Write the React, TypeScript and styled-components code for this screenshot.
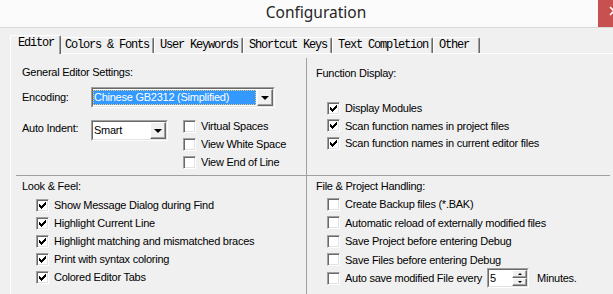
import React from 'react';
import styled, { createGlobalStyle } from 'styled-components';

const Global = createGlobalStyle`
  html, body { margin: 0; padding: 0; background: #f0f0f0; overflow: hidden; }
  body { font-family: "Liberation Sans", Arial, sans-serif; }
`;

const Window = styled.div`
  width: 613px;
  height: 294px;
  overflow: hidden;
  background: #f0f0f0;
  display: flex;
  flex-direction: column;
  font-family: "Liberation Sans", Arial, sans-serif;
  font-size: 11px;
  letter-spacing: -0.25px;
  color: #000;
`;

const TitleBar = styled.div`
  height: 27px;
  flex: none;
  background: #fbfbfb;
  border-bottom: 1px solid #d9d9d9;
  display: flex;
  align-items: flex-start;
`;

const Title = styled.div`
  flex: 1;
  text-align: center;
  padding-left: 34px;
  line-height: 25px;
  font-family: "Noto Sans", "Open Sans", sans-serif;
  font-size: 15.5px;
  letter-spacing: 0;
  color: #262626;
`;

const CloseButton = styled.div`
  width: 15px;
  height: 27px;
  box-sizing: border-box;
  background: #c75050;
  overflow: hidden;
  padding: 6px 0 0 11px;
`;

const Body = styled.div`
  flex: 1;
  min-height: 0;
  padding-top: 7px;
  display: flex;
  flex-direction: column;
`;

const TabStrip = styled.div`
  display: flex;
  align-items: flex-end;
  height: 18px;
  flex: none;
  padding-left: 12px;
  position: relative;
  z-index: 1;
`;

const Tab = styled.div<{ $active?: boolean; $min?: number }>`
  box-sizing: border-box;
  height: ${(p) => (p.$active ? 19 : 16)}px;
  margin: ${(p) => (p.$active ? '0 -2px -1px' : '0')};
  min-width: ${(p) => p.$min ?? 0}px;
  padding: ${(p) => (p.$active ? '0 6px 0 7px' : '0 4px 0 5px')};
  border: 1px solid #fff;
  border-right-color: #696969;
  border-bottom: none;
  border-radius: 2px 2px 0 0;
  box-shadow: inset -1px 0 #a0a0a0;
  background: #f0f0f0;
  font-family: "Liberation Mono", "Courier New", monospace;
  font-size: 12px;
  letter-spacing: -1.2px;
  line-height: 14px;
  white-space: nowrap;
  color: #000;
  position: relative;
  z-index: ${(p) => (p.$active ? 1 : 0)};
`;

const Panel = styled.div`
  flex: 1;
  min-height: 0;
  margin-left: 10px;
  border-top: 1px solid #fff;
  border-left: 1px solid #fff;
  padding: 4px 3px 0 5px;
  display: grid;
  grid-template-columns: 291px 1fr;
  grid-template-rows: 118px 1fr;
`;

const Group = styled.div<{ $divRight?: boolean; $divBottom?: boolean; $pt: number; $pl: number }>`
  box-sizing: border-box;
  border-right: ${(p) => (p.$divRight ? '1px solid #a0a0a0' : 'none')};
  border-bottom: ${(p) => (p.$divBottom ? '1px solid #a0a0a0' : 'none')};
  padding-top: ${(p) => p.$pt}px;
  padding-left: ${(p) => p.$pl}px;
  display: flex;
  flex-direction: column;
  min-width: 0;
`;

const Heading = styled.div`
  line-height: 13px;
  white-space: nowrap;
`;

const FieldRow = styled.div<{ $mt: number }>`
  display: flex;
  align-items: center;
  margin-top: ${(p) => p.$mt}px;
`;

const IndentRow = styled.div`
  display: flex;
  align-items: flex-start;
  margin-top: 9px;
`;

const Label = styled.div<{ $mt?: number }>`
  width: 69px;
  flex: none;
  line-height: 21px;
  margin-top: ${(p) => p.$mt ?? 0}px;
  white-space: nowrap;
`;

const Combo = styled.div<{ $w: number; $mt?: number }>`
  width: ${(p) => p.$w}px;
  height: 21px;
  flex: none;
  box-sizing: border-box;
  margin-top: ${(p) => p.$mt ?? 0}px;
  border: 1px solid;
  border-color: #a0a0a0 #fff #fff #a0a0a0;
  display: flex;
`;

const ComboInner = styled.div`
  flex: 1;
  display: flex;
  border: 1px solid;
  border-color: #696969 #e3e3e3 #e3e3e3 #696969;
  background: #fff;
  min-width: 0;
`;

const ComboText = styled.div<{ $selected?: boolean }>`
  flex: 1;
  min-width: 0;
  margin: ${(p) => (p.$selected ? '1px 1px 1px 0' : '0')};
  padding-left: 1px;
  background: ${(p) => (p.$selected ? '#3399ff' : 'transparent')};
  color: ${(p) => (p.$selected ? '#fff' : '#000')};
  outline: ${(p) => (p.$selected ? '1px dotted #e8c878' : 'none')};
  outline-offset: -1px;
  line-height: ${(p) => (p.$selected ? 15 : 17)}px;
  white-space: nowrap;
  overflow: hidden;
`;

const ArrowButton = styled.div<{ $w: number }>`
  width: ${(p) => p.$w}px;
  flex: none;
  box-sizing: border-box;
  border: 1px solid;
  border-color: #fff #696969 #696969 #fff;
  box-shadow: inset -1px -1px #a0a0a0;
  background: #f0f0f0;
  display: flex;
  align-items: center;
  justify-content: center;
`;

const DownArrow = styled.span<{ $size: number }>`
  width: 0;
  height: 0;
  border-left: ${(p) => p.$size}px solid transparent;
  border-right: ${(p) => p.$size}px solid transparent;
  border-top: ${(p) => p.$size}px solid #000;
`;

const UpArrow = styled.span<{ $size: number }>`
  width: 0;
  height: 0;
  border-left: ${(p) => p.$size}px solid transparent;
  border-right: ${(p) => p.$size}px solid transparent;
  border-bottom: ${(p) => p.$size}px solid #000;
`;

const CheckList = styled.div<{ $mt: number; $pl: number; $row: number }>`
  display: flex;
  flex-direction: column;
  margin-top: ${(p) => p.$mt}px;
  padding-left: ${(p) => p.$pl}px;
  & > * { height: ${(p) => p.$row}px; }
`;

const CheckRow = styled.div`
  display: flex;
  align-items: center;
  gap: 5px;
  white-space: nowrap;
`;

const Box = styled.span`
  width: 13px;
  height: 13px;
  box-sizing: border-box;
  flex: none;
  border: 1px solid;
  border-color: #a0a0a0 #fff #fff #a0a0a0;
  background: #fff;
  box-shadow: inset 1px 1px #696969, inset -1px -1px #e3e3e3;
  display: flex;
  align-items: center;
  justify-content: center;
`;

const Spinner = styled.div`
  width: 42px;
  height: 20px;
  box-sizing: border-box;
  margin-left: 0px;
  border: 1px solid;
  border-color: #a0a0a0 #fff #fff #a0a0a0;
  display: flex;
`;

const SpinInner = styled.div`
  flex: 1;
  display: flex;
  border: 1px solid;
  border-color: #696969 #e3e3e3 #e3e3e3 #696969;
  background: #fff;
`;

const SpinValue = styled.div`
  flex: 1;
  padding-left: 1px;
  line-height: 16px;
`;

const SpinButtons = styled.div`
  width: 15px;
  display: flex;
  flex-direction: column;
`;

const SpinHalf = styled(ArrowButton)`
  flex: 1;
  width: 15px;
`;

const After = styled.span`
  margin-left: 3px;
`;

const CheckMark = () => (
  <svg width="7" height="7" viewBox="0 0 7 7" shapeRendering="crispEdges">
    <path
      fill="#000"
      d="M6 0h1v1h-1z M5 1h2v1h-2z M0 2h1v1h-1z M4 2h3v1h-3z M0 3h2v1h-2z M3 3h3v1h-3z M0 4h5v1h-5z M1 5h3v1h-3z M2 6h1v1h-1z"
    />
  </svg>
);

const CloseGlyph = () => (
  <svg width="10" height="10" viewBox="0 0 10 10">
    <path d="M1 1L9 9M9 1L1 9" stroke="#fff" strokeWidth="1.6" />
  </svg>
);

const Check = ({ label, checked, children }: { label: string; checked?: boolean; children?: React.ReactNode }) => (
  <CheckRow>
    <Box>{checked && <CheckMark />}</Box>
    <span>{label}</span>
    {children}
  </CheckRow>
);

const tabs = ['Editor', 'Colors & Fonts', 'User Keywords', 'Shortcut Keys', 'Text Completion', 'Other'];

const lookFeel = [
  'Show Message Dialog during Find',
  'Highlight Current Line',
  'Highlight matching and mismatched braces',
  'Print with syntax coloring',
  'Colored Editor Tabs',
];

const fileHandling = [
  'Create Backup files (*.BAK)',
  'Automatic reload of externally modified files',
  'Save Project before entering Debug',
  'Save Files before entering Debug',
];

export default function App() {
  return (
    <Window>
      <Global />
      <TitleBar>
        <Title>Configuration</Title>
        <CloseButton>
          <CloseGlyph />
        </CloseButton>
      </TitleBar>
      <Body>
        <TabStrip>
          {tabs.map((t, i) => (
            <Tab key={t} $active={i === 0} $min={t === 'Other' ? 47 : 0}>
              {t}
            </Tab>
          ))}
        </TabStrip>
        <Panel>
          <Group $divRight $divBottom $pt={8} $pl={6}>
            <Heading>General Editor Settings:</Heading>
            <FieldRow $mt={8}>
              <Label>Encoding:</Label>
              <Combo $w={184}>
                <ComboInner>
                  <ComboText $selected>Chinese GB2312 (Simplified)</ComboText>
                  <ArrowButton $w={16}>
                    <DownArrow $size={4} />
                  </ArrowButton>
                </ComboInner>
              </Combo>
            </FieldRow>
            <IndentRow>
              <Label $mt={1}>Auto Indent:</Label>
              <Combo $w={77} $mt={3}>
                <ComboInner>
                  <ComboText>Smart</ComboText>
                  <ArrowButton $w={16}>
                    <DownArrow $size={4} />
                  </ArrowButton>
                </ComboInner>
              </Combo>
              <CheckList $mt={0} $pl={15} $row={18}>
                <Check label="Virtual Spaces" />
                <Check label="View White Space" />
                <Check label="View End of Line" />
              </CheckList>
            </IndentRow>
          </Group>
          <Group $divBottom $pt={9} $pl={9}>
            <Heading>Function Display:</Heading>
            <CheckList $mt={19.5} $pl={11} $row={17.5}>
              <Check label="Display Modules" checked />
              <Check label="Scan function names in project files" checked />
              <Check label="Scan function names in current editor files" checked />
            </CheckList>
          </Group>
          <Group $divRight $pt={4} $pl={6}>
            <Heading>Look &amp; Feel:</Heading>
            <CheckList $mt={3} $pl={14} $row={18}>
              {lookFeel.map((l) => (
                <Check key={l} label={l} checked />
              ))}
            </CheckList>
          </Group>
          <Group $pt={4} $pl={9}>
            <Heading>File &amp; Project Handling:</Heading>
            <CheckList $mt={2} $pl={11} $row={18.5}>
              {fileHandling.map((l) => (
                <Check key={l} label={l} />
              ))}
              <Check label="Auto save modified File every">
                <Spinner>
                  <SpinInner>
                    <SpinValue>5</SpinValue>
                    <SpinButtons>
                      <SpinHalf $w={15}>
                        <UpArrow $size={2} />
                      </SpinHalf>
                      <SpinHalf $w={15}>
                        <DownArrow $size={2} />
                      </SpinHalf>
                    </SpinButtons>
                  </SpinInner>
                </Spinner>
                <After>Minutes.</After>
              </Check>
            </CheckList>
          </Group>
        </Panel>
      </Body>
    </Window>
  );
}
